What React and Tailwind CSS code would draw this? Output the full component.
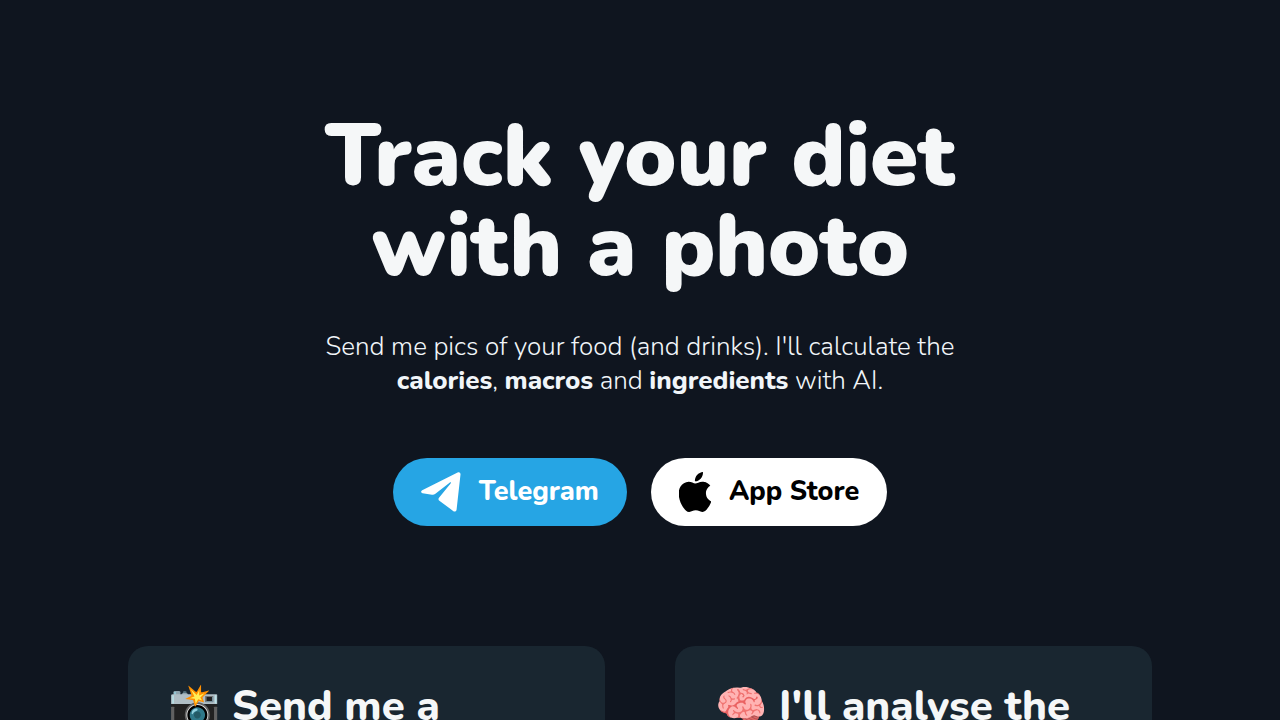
import { SiApple } from "react-icons/si";

function TelegramPlane() {
  return (
    <svg aria-hidden="true" className="h-10 w-10" viewBox="0 0 40 40" fill="currentColor">
      <path d="M1.200 18.300 36.600.6c1.600-.8 3.100.2 2.900 2L35.600 37.400c-.2 2-2 2.600-3.500 1.500L18.700 29c-1.500-1.100-1.600-2-.5-3.400L29.600 11.600c.8-1.100.1-1.700-1-.9L14.400 21.700c-1.200.9-2 1.200-3.400 1L1.600 21.200c-1.800-.3-2-2-.4-2.900Z" />
    </svg>
  );
}

function StoreLink({ href, tone, icon, children }) {
  return (
    <a href={href} className={`flex h-[68px] items-center gap-[18px] rounded-full px-7 ${tone}`}>
      {icon}
      {children}
    </a>
  );
}

function Card({ icon, title }) {
  return (
    <section className="h-96 rounded-[20px] bg-[#192630] px-10 pt-9">
      <h2 className="flex gap-3 text-[42px] font-extrabold leading-[50px] text-[#f5f7f8]">
        <span className="shrink-0">{icon}</span>
        <span>{title}</span>
      </h2>
    </section>
  );
}

export default function App() {
  return (
    <div className="h-screen overflow-hidden bg-[#0f151f] font-['Nunito','Open_Sans',sans-serif] text-[#f5f7f8]">
      <main className="mx-auto max-w-5xl pt-28">
        <header className="flex flex-col items-center text-center">
          <h1 className="text-[87px] font-black leading-[90px]">Track your diet<br />with a photo</h1>
          <p className="mt-[38px] text-[26px] font-light leading-[34px] text-[#f1f5f9]">
            Send me pics of your food (and drinks). I'll calculate the<br />
            <strong className="font-extrabold">calories</strong>, <strong className="font-extrabold">macros</strong> and <strong className="font-extrabold">ingredients</strong> with AI.
          </p>
          <div className="mt-[60px] flex gap-6 text-[27px] font-extrabold">
            <StoreLink href="#telegram" tone="bg-[#26a5e4] text-white" icon={<TelegramPlane />}>Telegram</StoreLink>
            <StoreLink href="#app-store" tone="bg-white text-black" icon={<SiApple className="h-10 w-8" viewBox="2.4 0 19.2 24" />}>App Store</StoreLink>
          </div>
        </header>
        <div className="mt-[120px] grid grid-cols-2 gap-[70px]">
          <Card icon="📸" title="Send me a" />
          <Card icon="🧠" title="I'll analyse the" />
        </div>
      </main>
    </div>
  );
}
